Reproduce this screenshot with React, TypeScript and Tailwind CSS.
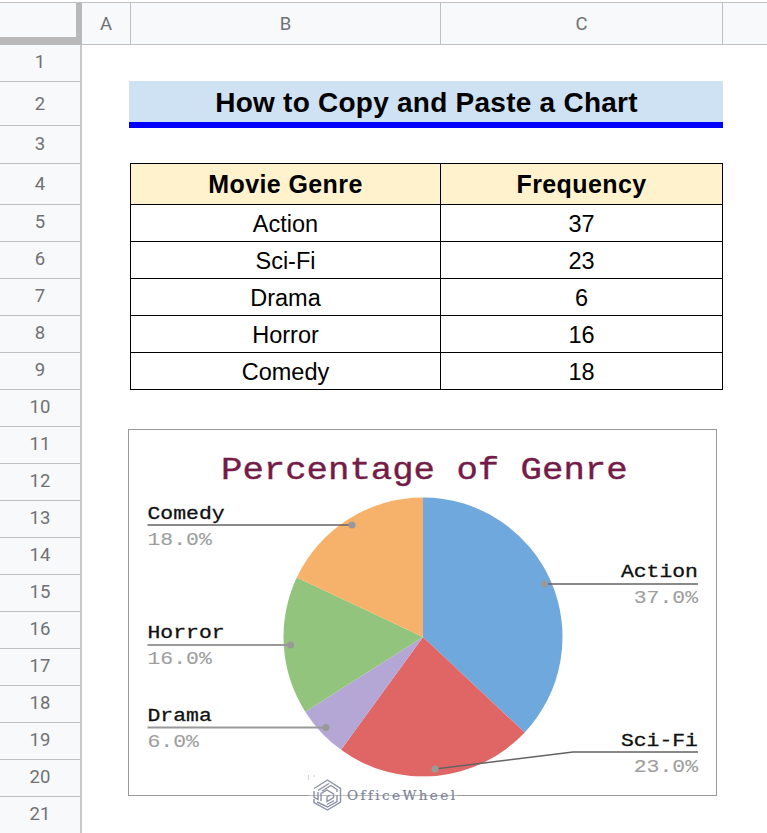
import clsx from 'clsx'

interface Slice {
  label: string
  value: number
  color: string
  side: 'left' | 'right'
  // baseline of the label, height of the rule, dot at the end of the leader
  baseline: number
  rule: number
  ruleWidth: number
  ruleColor: string
  dot: [number, number]
  elbow?: number
}

const CX = 423
const CY = 637
const R = 139.5
const LEFT = 147.5
const RIGHT = 698
const LABEL_STEP = 12.85
const TITLE_STEP = 21.4

const SLICES: Slice[] = [
  { label: 'Action', value: 37, color: '#6fa8dc', side: 'right', baseline: 577, rule: 584, ruleWidth: 1.5, ruleColor: '#636363', dot: [544.5, 584] },
  { label: 'Sci-Fi', value: 23, color: '#e06666', side: 'right', baseline: 746, rule: 752, ruleWidth: 1.5, ruleColor: '#636363', dot: [435, 769], elbow: 573 },
  { label: 'Drama', value: 6, color: '#b4a7d6', side: 'left', baseline: 721, rule: 727.5, ruleWidth: 2, ruleColor: '#999999', dot: [326, 727.5] },
  { label: 'Horror', value: 16, color: '#93c47d', side: 'left', baseline: 638, rule: 645, ruleWidth: 2, ruleColor: '#999999', dot: [290.5, 645] },
  { label: 'Comedy', value: 18, color: '#f6b26b', side: 'left', baseline: 518.5, rule: 525, ruleWidth: 1.7, ruleColor: '#636363', dot: [352, 525] },
]

const ROW_HEIGHTS = ['h-[37px]', 'h-11', 'h-[38px]', 'h-[41px]']

function point(percent: number) {
  const angle = (percent / 100) * Math.PI * 2
  return `${CX + R * Math.sin(angle)} ${CY - R * Math.cos(angle)}`
}

function Pie() {
  let from = 0
  return (
    <g>
      {SLICES.map(s => {
        const start = from
        from += s.value
        return (
          <path
            key={s.label}
            d={`M${CX} ${CY}L${point(start)}A${R} ${R} 0 0 1 ${point(from)}Z`}
            fill={s.color}
          />
        )
      })}
    </g>
  )
}

interface WideTextProps {
  text: string
  x: number
  y: number
  step: number
  size: number
  color: string
  weight?: number
}

// Monospace text stretched to a fixed advance per character
function WideText({ text, x, y, step, size, color, weight = 0.3 }: WideTextProps) {
  return (
    <text
      x={x}
      y={y}
      textLength={text.length * step}
      lengthAdjust="spacingAndGlyphs"
      fontSize={size}
      fill={color}
      stroke={color}
      strokeWidth={weight}
    >
      {text}
    </text>
  )
}

function SliceLabel({ slice }: { slice: Slice }) {
  const percent = `${slice.value.toFixed(1)}%`
  const right = slice.side === 'right'
  const edge = right ? RIGHT : LEFT
  const labelX = right ? RIGHT - slice.label.length * LABEL_STEP : LEFT
  const percentX = right ? RIGHT - percent.length * LABEL_STEP : LEFT
  const [dx, dy] = slice.dot
  const middle = slice.elbow ? `L${slice.elbow} ${slice.rule}` : ''
  return (
    <g>
      <path
        d={`M${edge} ${slice.rule}${middle}L${dx} ${dy}`}
        fill="none"
        stroke={slice.ruleColor}
        strokeWidth={slice.ruleWidth}
      />
      <circle cx={dx} cy={dy} r="3.6" fill="#999999" />
      <WideText text={slice.label} x={labelX} y={slice.baseline} step={LABEL_STEP} size={18.2} color="#111111" />
      <WideText text={percent} x={percentX} y={slice.baseline + 26} step={LABEL_STEP} size={18.2} color="#9e9e9e" weight={0.1} />
    </g>
  )
}

function Watermark() {
  return (
    <g>
      <rect x="309" y="776" width="148" height="36" fill="#ffffff" opacity="0.35" />
      <path d="M308.5 775v5M313 776h2" stroke="#d0d2da" />
      <g fill="none" stroke="#8d93a6" strokeWidth="1.4">
        <path d="M314 788.500L327.500 780L340.500 788.500V802L327.500 810L314 802.500V799" />
        <path d="M318 790.500L329 783.500M322 791L331 785.500L337 789.500V792" />
        <path d="M314 791V797L318 799.500V792M321 801V793.500L327 790L333.500 794V797.500L327 801.500V797L330.500 795" />
        <path d="M317 802L327.500 807L337 801.500V795M327 804.500L334 800.500" />
      </g>
      <text
        x="347"
        y="799.5"
        textLength="108"
        fontSize="13.5"
        fill="#7c8399"
        stroke="#7c8399"
        strokeWidth="0.2"
        className="font-['DejaVu_Serif',serif] [font-variant-ligatures:none]"
      >
        OfficeWheel
      </text>
    </g>
  )
}

function Chart() {
  return (
    <div className="mt-[39px] -ml-0.5 h-[367px] w-[589px] border border-[#999999] bg-white">
      <svg
        viewBox="129 430 587 365"
        width="587"
        height="365"
        className="block overflow-visible font-['Liberation_Mono',monospace]"
      >
        <WideText text="Percentage of Genre" x={221} y={478.5} step={TITLE_STEP} size={31} color="#741b47" weight={0.4} />
        <Pie />
        {SLICES.map(s => (
          <SliceLabel key={s.label} slice={s} />
        ))}
        <Watermark />
      </svg>
    </div>
  )
}

function ColumnHeader({ name, className }: { name: string; className: string }) {
  return (
    <div className={clsx('flex shrink-0 items-center justify-center border-r border-[#c0c0c0] pt-0.5', className)}>
      {name}
    </div>
  )
}

export default function App() {
  return (
    <div className="flex h-[833px] w-[767px] flex-col overflow-hidden bg-white font-['Liberation_Sans',sans-serif] text-black">
      {/* Column headers */}
      <div className="mt-0.5 flex h-[43px] shrink-0 border-y border-[#c0c0c0] bg-[#f8f9fa] font-[Roboto,sans-serif] text-[18.500px] text-[#707175]">
        <div className="h-[42px] w-[82px] shrink-0 border-r-[6px] border-b-8 border-[#b9b9b9]" />
        <ColumnHeader name="A" className="w-[49px]" />
        <ColumnHeader name="B" className="w-[310px]" />
        <ColumnHeader name="C" className="w-[282px]" />
      </div>

      <div className="flex min-h-0 flex-1">
        {/* Row numbers */}
        <div className="w-[82px] shrink-0 border-r-2 border-[#c8c8c8] bg-[#f8f9fa] font-[Roboto,sans-serif] text-[18.500px] text-[#707175]">
          {Array.from({ length: 21 }, (_, i) => (
            <div
              key={i}
              className={clsx(
                'flex items-center justify-center border-b border-[#c0c0c0]',
                ROW_HEIGHTS[i] ?? 'h-[37px]',
                (i === 1 || i === 3) && 'pt-0.5',
              )}
            >
              {i + 1}
            </div>
          ))}
        </div>

        {/* Cells */}
        <div className="pt-9 pl-12">
          <h1 className="-ml-px flex h-[47px] w-[594px] items-center justify-center border-b-6 border-[#0000ff] bg-[#cfe2f3] pt-0.5 pl-px text-[28px] font-bold tracking-[0.25px]">
            How to Copy and Paste a Chart
          </h1>
          <table className="mt-[35px] w-[593px] table-fixed border-collapse text-center text-[23.500px]">
            <colgroup>
              <col className="w-[310px]" />
              <col className="w-[282px]" />
            </colgroup>
            <thead>
              <tr className="h-[41px] bg-[#fff2cc] text-[25px] leading-none tracking-[0.4px]">
                <th className="border border-black p-0 font-bold">Movie Genre</th>
                <th className="border border-black p-0 font-bold">Frequency</th>
              </tr>
            </thead>
            <tbody>
              {SLICES.map(s => (
                <tr key={s.label} className="h-[37px] leading-none">
                  <td className="border border-black p-0 pt-[3px]">{s.label}</td>
                  <td className="border border-black p-0 pt-[3px]">{s.value}</td>
                </tr>
              ))}
            </tbody>
          </table>
          <Chart />
        </div>
      </div>
    </div>
  )
}
